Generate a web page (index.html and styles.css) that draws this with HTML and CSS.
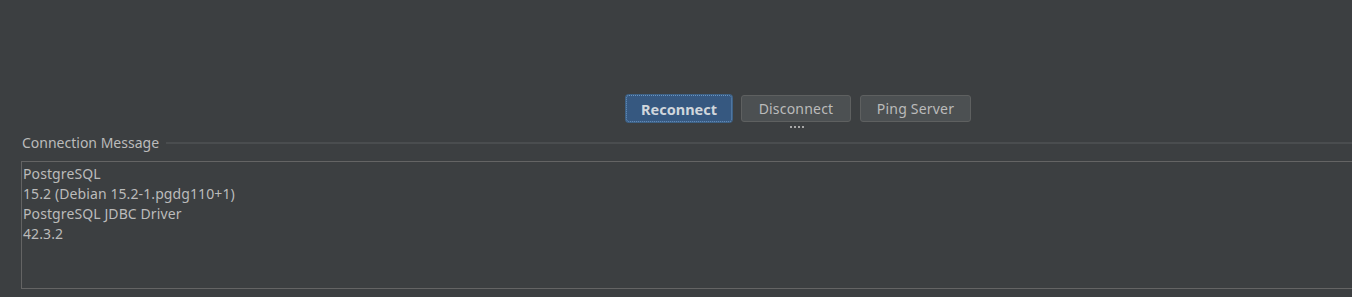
FILE: index.html
```html
<!DOCTYPE html>
<html lang="en">
<head>
    <meta charset="UTF-8">
    <title>Connection</title>
    <link rel="stylesheet" href="styles.css">
</head>
<body>
    <div class="panel">
        <div class="toolbar">
            <button class="btn btn-default">Reconnect</button>
            <button class="btn btn-disconnect">Disconnect</button>
            <button class="btn btn-ping">Ping Server</button>
        </div>
        <div class="splitter">
            <span class="grip"></span>
        </div>
        <div class="group">
            <div class="group-title">
                <span>Connection Message</span>
                <div class="group-line"></div>
            </div>
            <div class="message">
                <div>PostgreSQL</div>
                <div>15.2 (Debian 15.2-1.pgdg110+1)</div>
                <div>PostgreSQL JDBC Driver</div>
                <div>42.3.2</div>
            </div>
        </div>
    </div>
</body>
</html>
```

FILE: styles.css
```css
html, body {
    margin: 0;
    height: 100%;
    background: #3c3f41;
    overflow: hidden;
}

body {
    font-family: "Noto Sans", "Open Sans", sans-serif;
    font-size: 13px;
    color: #bbbbbb;
}

.panel {
    padding-top: 95px;
}

.toolbar {
    display: flex;
    gap: 9px;
    padding-left: 626px;
    height: 27px;
}

.btn {
    box-sizing: border-box;
    height: 27px;
    padding: 0;
    white-space: nowrap;
    border: 1px solid #5e6060;
    border-radius: 3px;
    background: #4c5052;
    color: #bbbbbb;
    font-family: inherit;
    font-size: 14px;
    letter-spacing: 0.2px;
}

.btn-default {
    width: 106px;
    background: #365880;
    border: 1px dotted #6a94c0;
    box-shadow: 0 0 0 1px #3d6185;
    color: #d0d6dc;
    font-weight: bold;
    font-size: 14.5px;
    letter-spacing: 0;
}

.btn-disconnect { width: 110px; }
.btn-ping { width: 111px; }

.splitter {
    height: 13px;
    position: relative;
}

/* four little dots of the splitter handle */
.grip {
    position: absolute;
    left: 790px;
    top: 4px;
    width: 16px;
    height: 2px;
    background: linear-gradient(90deg, #a8a8a8 2px, transparent 2px) 0 0 / 4px 2px repeat-x;
}

.group {
    padding-left: 21px;
}

.group-title {
    display: flex;
    align-items: center;
    height: 14px;
    font-size: 14px;
    margin-left: 1px;
}

.group-line {
    flex: 1;
    height: 2px;
    margin-left: 7px;
    margin-top: 1px;
    background: #4a4d4f;
}

.message {
    margin-top: 12px;
    height: 128px;
    box-sizing: border-box;
    border: 1px solid #646464;
    border-right: none;
    padding: 2px 0 0 1px;
    font-size: 14px;
    line-height: 20px;
    letter-spacing: 0.1px;
}
```
